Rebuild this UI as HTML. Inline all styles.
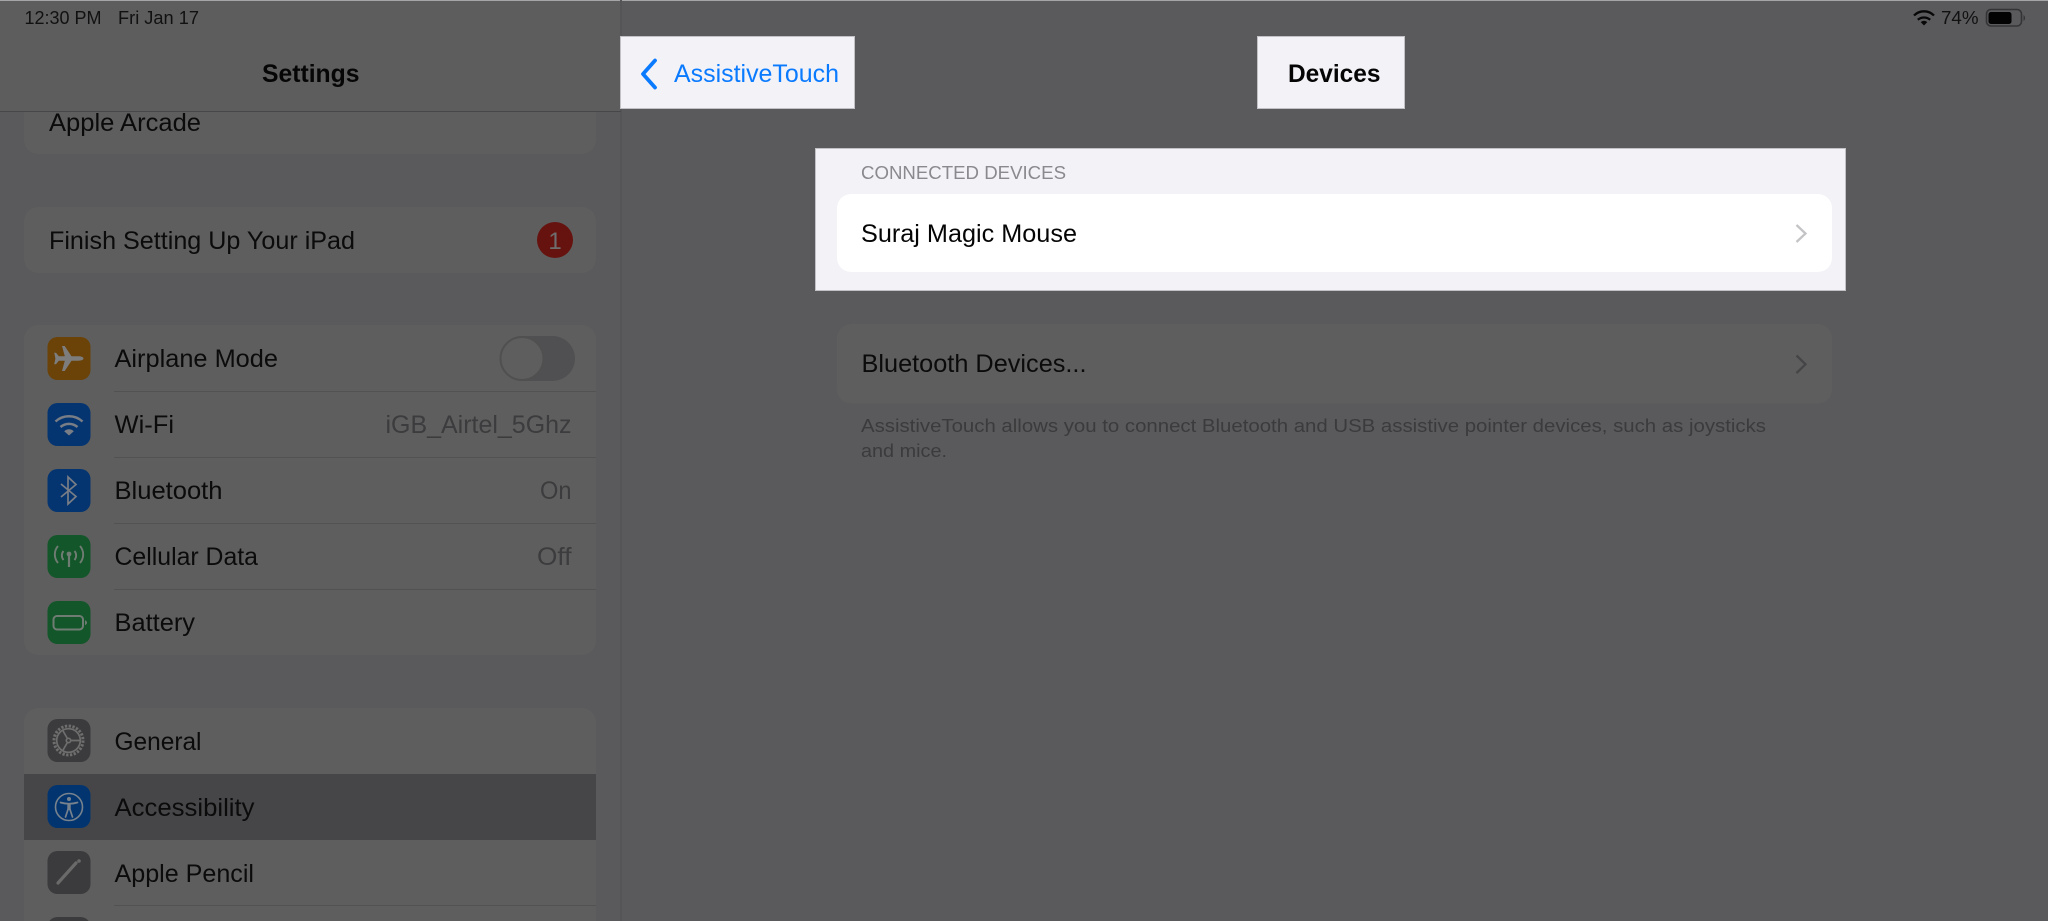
<!DOCTYPE html>
<html>
<head>
<meta charset="utf-8">
<title>Devices</title>
<style>
html,body{margin:0;padding:0;background:#5a5a5c;overflow:hidden}
svg{display:block}
text{font-family:"Liberation Sans",sans-serif}
</style>
</head>
<body>
<svg width="2048" height="921" viewBox="0 0 2048 921" xmlns="http://www.w3.org/2000/svg">
<rect width="2048" height="921" fill="#5a5a5c"/>
<rect x="0" y="0" width="2048" height="1" fill="#a5a5a7"/>
<rect x="620" y="0" width="2" height="921" fill="#555557"/>

<!-- Sidebar cards -->
<rect x="24" y="90" width="572" height="64" rx="14" fill="#5e5e5e"/>
<rect x="24" y="207" width="572" height="66" rx="14" fill="#5e5e5e"/>
<rect x="24" y="325" width="572" height="330" rx="14" fill="#5e5e5e"/>
<rect x="24" y="708" width="572" height="230" rx="14" fill="#5e5e5e"/>
<rect x="24" y="774" width="572" height="66" fill="#464648"/>
<g fill="#525252">
<rect x="114" y="391" width="482" height="1"/>
<rect x="114" y="457" width="482" height="1"/>
<rect x="114" y="523" width="482" height="1"/>
<rect x="114" y="589" width="482" height="1"/>
<rect x="114" y="905" width="482" height="1"/>
</g>

<!-- Sidebar header -->
<rect x="0" y="1" width="620" height="110" fill="#5d5d5e"/>
<rect x="0" y="111" width="621" height="1" fill="#474749"/>

<!-- Status bar -->
<g fill="#111112" font-size="18">
<text x="24.5" y="24" textLength="77" lengthAdjust="spacingAndGlyphs">12:30 PM</text>
<text x="118" y="24" textLength="81" lengthAdjust="spacingAndGlyphs">Fri Jan 17</text>
<text x="1941" y="24" textLength="37.5" lengthAdjust="spacingAndGlyphs">74%</text>
</g>
<g fill="none" stroke="#070708" stroke-width="2.300" stroke-linecap="butt">
<path d="M1914 15.500a14 14 0 0 1 20 0"/>
<path d="M1917.800 19.800a9.500 9.500 0 0 1 12.400 0"/>
</g>
<path d="M1924 25.500l-3.300-3.400a4.800 4.800 0 0 1 6.600 0z" fill="#070708"/>
<rect x="1986.500" y="9.500" width="35" height="16.500" rx="4.500" fill="none" stroke="#343436" stroke-width="1.600"/>
<rect x="1988.500" y="12" width="23" height="12" rx="2.500" fill="#030304"/>
<path d="M2023.500 15v6a3.200 3.200 0 0 0 1.500-3a3.200 3.200 0 0 0-1.500-3z" fill="#363638"/>

<!-- Sidebar text -->
<text x="262" y="82" font-size="25" font-weight="700" fill="#060607" textLength="97.500" lengthAdjust="spacingAndGlyphs">Settings</text>
<g font-size="25" fill="#0b0b0c">
<text x="49" y="131" textLength="152" lengthAdjust="spacingAndGlyphs">Apple Arcade</text>
<text x="49" y="249" textLength="306" lengthAdjust="spacingAndGlyphs">Finish Setting Up Your iPad</text>
<text x="114.500" y="367" textLength="163.500" lengthAdjust="spacingAndGlyphs">Airplane Mode</text>
<text x="114.500" y="433" textLength="59.500" lengthAdjust="spacingAndGlyphs">Wi-Fi</text>
<text x="114.500" y="499" textLength="108" lengthAdjust="spacingAndGlyphs">Bluetooth</text>
<text x="114.500" y="565" textLength="143.500" lengthAdjust="spacingAndGlyphs">Cellular Data</text>
<text x="114.500" y="631" textLength="80.500" lengthAdjust="spacingAndGlyphs">Battery</text>
<text x="114.500" y="750" textLength="87" lengthAdjust="spacingAndGlyphs">General</text>
<text x="114.500" y="816" textLength="140" lengthAdjust="spacingAndGlyphs">Accessibility</text>
<text x="114.500" y="882" textLength="139.500" lengthAdjust="spacingAndGlyphs">Apple Pencil</text>
</g>
<g font-size="25" fill="#3c3c3e">
<text x="385.500" y="433" textLength="186" lengthAdjust="spacingAndGlyphs">iGB_Airtel_5Ghz</text>
<text x="540" y="499" textLength="31.500" lengthAdjust="spacingAndGlyphs">On</text>
<text x="537" y="565" textLength="34.500" lengthAdjust="spacingAndGlyphs">Off</text>
</g>

<!-- Badge -->
<circle cx="555" cy="240" r="18" fill="#66130f"/>
<text x="555" y="249" font-size="24" fill="#6e6e6e" text-anchor="middle">1</text>

<!-- Toggle -->
<rect x="500" y="336" width="75" height="45" rx="22.500" fill="#505052"/>
<circle cx="522" cy="358.500" r="21.500" fill="#5e5e5e" stroke="#505051" stroke-width="2"/>

<!-- Icon tiles -->
<rect x="47.500" y="337" width="43" height="43" rx="10" fill="#6b4207"/>
<rect x="47.500" y="403" width="43" height="43" rx="10" fill="#053570"/>
<rect x="47.500" y="469" width="43" height="43" rx="10" fill="#053570"/>
<rect x="47.500" y="535" width="43" height="43" rx="10" fill="#135629"/>
<rect x="47.500" y="601" width="43" height="43" rx="10" fill="#135629"/>
<rect x="47.500" y="719" width="43" height="43" rx="10" fill="#3b3b3d"/>
<rect x="47.500" y="785" width="43" height="43" rx="10" fill="#023570"/>
<rect x="47.500" y="851" width="43" height="43" rx="10" fill="#3b3b3d"/>
<rect x="47.500" y="917" width="43" height="43" rx="10" fill="#3b3b3d"/>

<!-- Airplane -->
<path d="M83.500 358.500c0-1.300-2.500-2.200-5-2.200h-7l-6.800-10.300h-2.700l2.800 10.300h-6l-2.800-3.600h-1.800l1.200 5.800l-1.200 5.800h1.800l2.800-3.600h6l-2.800 10.300h2.700l6.800-10.300h7c2.500 0 5-.9 5-2.200z" fill="#7d7d7d"/>
<!-- Wi-Fi -->
<g fill="none" stroke="#787d86" stroke-width="2.500">
<path d="M55.500 421.500a20 20 0 0 1 27 0"/>
<path d="M60.500 427a13 13 0 0 1 17 0"/>
</g>
<path d="M69 435.500l-4.800-4.300a7 7 0 0 1 9.600 0z" fill="#787d86"/>
<!-- Bluetooth -->
<path d="M61 484l15 12.500l-8 7.500v-27l8 7.500l-15 12.500" fill="none" stroke="#787d86" stroke-width="1.700"/>
<!-- Cellular -->
<g fill="none" stroke="#6f7c73" stroke-width="1.900">
<path d="M69 553v14" stroke-width="2.200"/>
<path d="M63.500 560a7 7 0 0 1 0-9"/>
<path d="M74.500 551a7 7 0 0 1 0 9"/>
<path d="M58 563a13 13 0 0 1 0-17"/>
<path d="M80 546a13 13 0 0 1 0 17"/>
</g>
<circle cx="69" cy="554" r="2.400" fill="#6f7c73"/>
<!-- Battery -->
<rect x="53.500" y="616" width="29.500" height="13.500" rx="3.500" fill="none" stroke="#6f7c73" stroke-width="2"/>
<path d="M85 620.300v4.800a3 3 0 0 0 2-2.400a3 3 0 0 0-2-2.400z" fill="#6f7c73"/>
<!-- Gear -->
<g fill="none" stroke="#6e6e6e">
<circle cx="68.500" cy="740.500" r="14.500" stroke-width="3" stroke-dasharray="2.300 1.500"/>
<circle cx="68.500" cy="740.500" r="11.800" stroke-width="1.700"/>
<path d="M70.800 740.500H80.300M67.400 738.500L62.500 730M67.400 742.500L62.500 751" stroke-width="1.700"/>
<circle cx="68.500" cy="740.500" r="2.200" stroke-width="1.700"/>
</g>
<!-- Accessibility -->
<circle cx="69" cy="807" r="13.500" fill="none" stroke="#77828d" stroke-width="1.600"/>
<circle cx="69" cy="799" r="2" fill="#77828d"/>
<path d="M60.500 802.500q8.500 2.500 17 0" fill="none" stroke="#77828d" stroke-width="1.700" stroke-linecap="round"/>
<path d="M69 803.500v6.500" fill="none" stroke="#77828d" stroke-width="3.400"/>
<path d="M68 809.500l-2.500 7.500M70 809.500l2.500 7.500" fill="none" stroke="#77828d" stroke-width="1.700" stroke-linecap="round"/>
<!-- Pencil -->
<path d="M58 883l18-20" stroke="#6a6a6a" stroke-width="3.200" stroke-linecap="round" fill="none"/>
<circle cx="79" cy="861" r="1.800" fill="#6a6a6a"/>

<!-- Detail dimmed card -->
<rect x="837" y="324" width="995" height="79.500" rx="14" fill="#5e5e5e"/>
<text x="861.500" y="372" font-size="25" fill="#0b0b0c" textLength="225" lengthAdjust="spacingAndGlyphs">Bluetooth Devices...</text>
<path d="M1796.500 355.500l9 8.800l-9 8.800" fill="none" stroke="#454547" stroke-width="2.300"/>
<g font-size="18" fill="#3b3b3d">
<text x="861" y="432" textLength="905" lengthAdjust="spacingAndGlyphs">AssistiveTouch allows you to connect Bluetooth and USB assistive pointer devices, such as joysticks</text>
<text x="861" y="457" textLength="86" lengthAdjust="spacingAndGlyphs">and mice.</text>
</g>

<!-- Highlight boxes -->
<rect x="620.500" y="36.500" width="234" height="72" fill="#f2f2f7" stroke="#c2c2c6" stroke-width="1"/>
<rect x="1257.500" y="36.500" width="147" height="72" fill="#f2f2f7" stroke="#c2c2c6" stroke-width="1"/>
<rect x="815.500" y="148.500" width="1030" height="142" fill="#f2f2f7" stroke="#c2c2c6" stroke-width="1"/>

<path d="M655 60.500l-12 13.500l12 13.500" fill="none" stroke="#0a7aff" stroke-width="3.800" stroke-linecap="round" stroke-linejoin="round"/>
<text x="674" y="82" font-size="25" fill="#0a7aff" textLength="165" lengthAdjust="spacingAndGlyphs">AssistiveTouch</text>
<text x="1288" y="82" font-size="25" font-weight="700" fill="#050506" textLength="92.500" lengthAdjust="spacingAndGlyphs">Devices</text>
<text x="861" y="179" font-size="18" fill="#8a8a8e" textLength="205" lengthAdjust="spacingAndGlyphs">CONNECTED DEVICES</text>
<rect x="837" y="194" width="995" height="78" rx="14" fill="#ffffff"/>
<text x="861" y="242" font-size="25" fill="#050506" textLength="216" lengthAdjust="spacingAndGlyphs">Suraj Magic Mouse</text>
<path d="M1796.500 225l9 8.500l-9 8.500" fill="none" stroke="#c4c4c7" stroke-width="2.300"/>
</svg>
</body>
</html>
